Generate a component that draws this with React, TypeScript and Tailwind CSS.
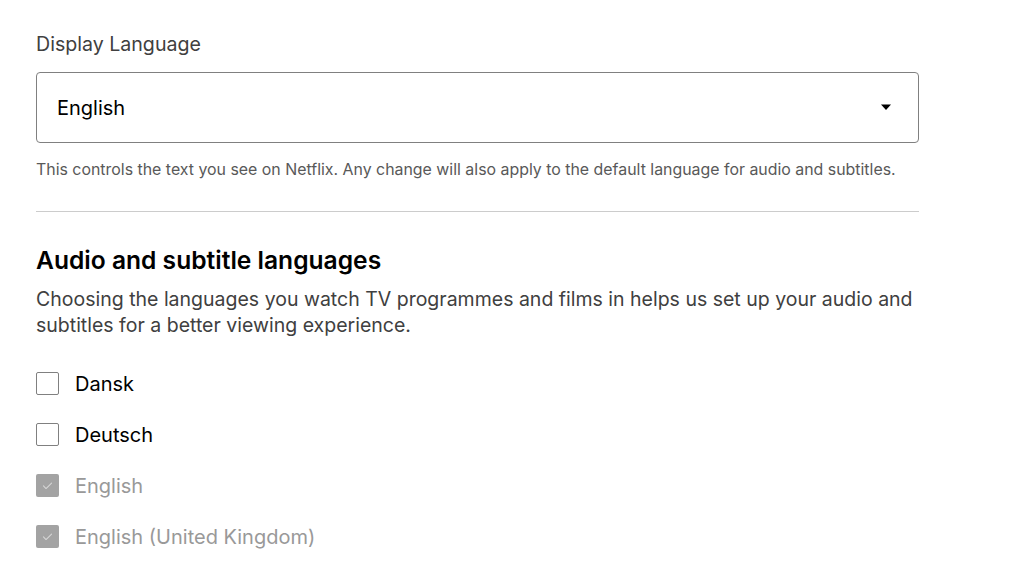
import React from "react";

const font = { fontFamily: "Inter, 'Noto Sans', sans-serif" };

function Box({ checked }: { checked?: boolean }) {
  if (checked) {
    return (
      <span className="flex h-[23px] w-[23px] items-center justify-center rounded-[2px] bg-[#a3a3a3]">
        <svg width="13" height="13" viewBox="0 0 16 16" fill="none">
          <path d="M3 8.5l3.2 3.2L13 5" stroke="#d6d6d6" strokeWidth="1.3" strokeLinecap="round" strokeLinejoin="round" />
        </svg>
      </span>
    );
  }
  return <span className="h-[23px] w-[23px] rounded-[2px] border border-[#808080] bg-white" />;
}

export default function App() {
  const langs = [
    { name: "Dansk", checked: false },
    { name: "Deutsch", checked: false },
    { name: "English", checked: true },
    { name: "English (United Kingdom)", checked: true },
  ];
  return (
    <div className="h-[576px] w-[1024px] overflow-hidden bg-white" style={font}>
      <div className="ml-[36px] w-[883px] pt-[31px]">
        <div className="text-[19.6px] leading-[26px] text-[#404040]">Display Language</div>
        <div className="mt-[15px] flex h-[71px] items-center justify-between rounded-[4px] border border-[#808080] pl-[20px] pr-[26px]">
          <span className="text-[20px] text-black">English</span>
          <svg width="12" height="7" viewBox="0 0 12 7">
            <path d="M1 0.5h10L6 6z" fill="#000" />
          </svg>
        </div>
        <p className="mt-[15px] text-[15.9px] leading-[24px] text-[#595959]">
          This controls the text you see on Netflix. Any change will also apply to the default language for audio and subtitles.
        </p>
        <div className="mt-[29px] h-px bg-[#cccccc]" />
        <h2 className="mt-[33px] text-[24.6px] font-semibold leading-[30px] text-black">Audio and subtitle languages</h2>
        <p className="mt-[11px] text-[19.5px] leading-[26px] text-[#404040]">
          Choosing the languages you watch TV programmes and films in helps us set up your audio and subtitles for a better viewing experience.
        </p>
        <div className="mt-[34px] flex flex-col gap-[28px]">
          {langs.map((l) => (
            <label key={l.name} className="flex h-[23px] items-center gap-[16px]">
              <Box checked={l.checked} />
              <span className={`text-[20px] ${l.checked ? "text-[#999999]" : "text-black"}`}>{l.name}</span>
            </label>
          ))}
        </div>
      </div>
    </div>
  );
}
